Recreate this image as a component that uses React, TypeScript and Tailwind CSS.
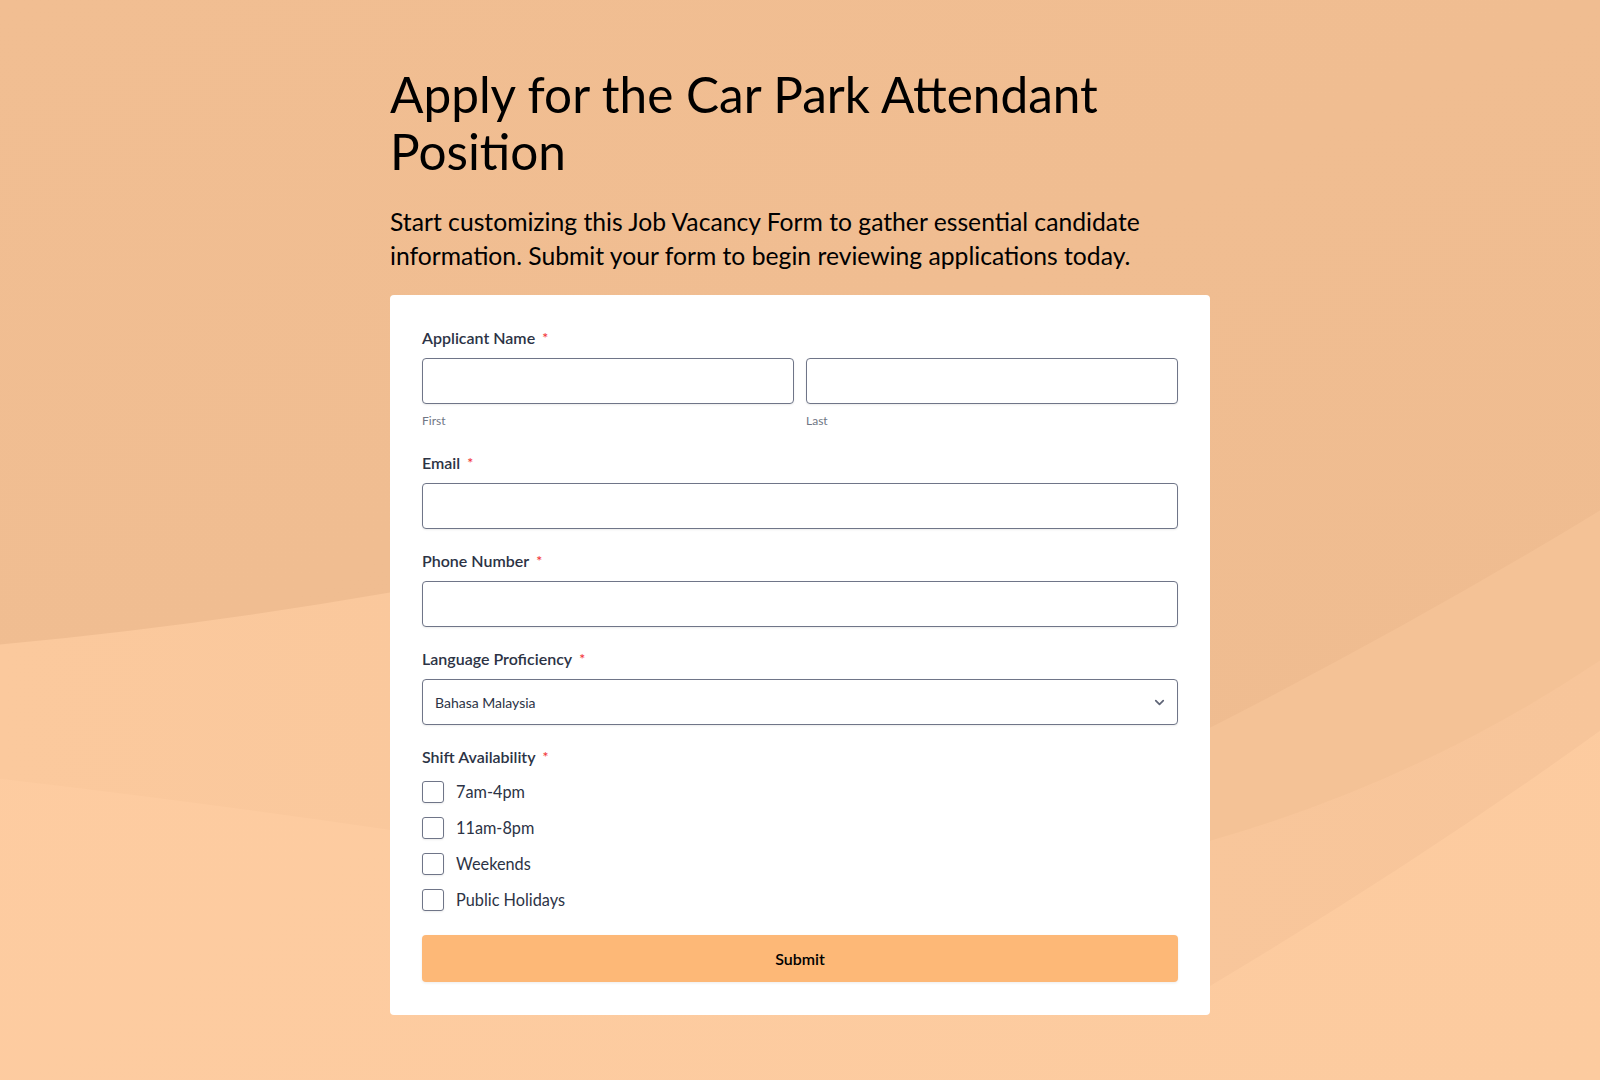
import { ChevronDown } from "lucide-react";

const font = { fontFamily: "Lato, 'Open Sans', sans-serif" };

function Label({ text }: { text: string }) {
  return (
    <div className="flex items-center text-[16px] font-semibold leading-5 text-[#2c3345]">
      {text}
      <span className="ml-[7px] text-[14px] leading-none text-[#f23a3c]">*</span>
    </div>
  );
}

const inputCls =
  "h-[46px] w-full rounded-[4px] border border-[#6f7588] bg-white shadow-[0_1px_2px_rgba(0,0,0,0.08)] outline-none";

const shifts = ["7am-4pm", "11am-8pm", "Weekends", "Public Holidays"];

function Background() {
  return (
    <svg
      className="pointer-events-none absolute inset-0 h-full w-full"
      viewBox="0 0 1600 1080"
      preserveAspectRatio="none"
    >
      <defs>
        <linearGradient id="light" x1="0" y1="0" x2="1" y2="1">
          <stop offset="0" stopColor="#fecca1" />
          <stop offset="1" stopColor="#fccb9f" />
        </linearGradient>
        <linearGradient id="mid" x1="0" y1="0" x2="1" y2="0">
          <stop offset="0" stopColor="#fbc99d" />
          <stop offset="1" stopColor="#f7c59a" />
        </linearGradient>
        <linearGradient id="dark" x1="0" y1="0" x2="1" y2="1">
          <stop offset="0" stopColor="#f1be92" />
          <stop offset="1" stopColor="#efbc90" />
        </linearGradient>
      </defs>
      <rect width="1600" height="1080" fill="url(#light)" />
      <path d="M0,778 Q700,860 1210,985 Q1420,860 1600,730 V0 H0 Z" fill="url(#mid)" />
      <path d="M1210,840 Q1420,780 1600,660 V0 H1210 Z" fill="#f4c296" />
      <path d="M0,644 Q200,625 390,592 L1210,727 Q1420,620 1600,510 V0 H0 Z" fill="url(#dark)" />
    </svg>
  );
}

export default function App() {
  return (
    <div className="relative min-h-screen overflow-hidden bg-[#fccb9f]" style={font}>
      <Background />
      <div className="relative mx-auto w-[820px] pt-[66px] pb-[66px]">
        <h1 className="text-[49.5px] font-normal leading-[57px] text-black">
          Apply for the Car Park Attendant Position
        </h1>
        <p className="mt-[25px] text-[24.7px] leading-[34px] text-black">
          Start customizing this Job Vacancy Form to gather essential candidate
          information. Submit your form to begin reviewing applications today.
        </p>

        <form className="mt-[22px] rounded-[4px] bg-white px-8 pt-[33px] pb-[33px]">
          <Label text="Applicant Name" />
          <div className="mt-[10px] grid grid-cols-2 gap-3">
            <div>
              <input className={inputCls} />
              <div className="mt-[9px] text-[12px] leading-4 text-[#6f7684]">First</div>
            </div>
            <div>
              <input className={inputCls} />
              <div className="mt-[9px] text-[12px] leading-4 text-[#6f7684]">Last</div>
            </div>
          </div>

          <div className="mt-[24px]">
            <Label text="Email" />
            <input className={`${inputCls} mt-[10px]`} />
          </div>

          <div className="mt-[22px]">
            <Label text="Phone Number" />
            <input className={`${inputCls} mt-[10px]`} />
          </div>

          <div className="mt-[22px]">
            <Label text="Language Proficiency" />
            <div className={`${inputCls} mt-[10px] flex items-center justify-between pl-3 pr-[10px]`}>
              <span className="text-[14px] text-[#2c3345]">Bahasa Malaysia</span>
              <ChevronDown size={15} strokeWidth={2.75} className="text-[#5f6577]" />
            </div>
          </div>

          <div className="mt-[22px]">
            <Label text="Shift Availability" />
            <div className="mt-[14px] flex flex-col gap-[14px]">
              {shifts.map((s) => (
                <label key={s} className="flex items-center gap-3">
                  <span className="h-[22px] w-[22px] rounded-[3px] border border-[#6f7588] bg-white shadow-[0_1px_2px_rgba(0,0,0,0.08)]" />
                  <span className="text-[16.3px] leading-[22px] text-[#2c3345]">{s}</span>
                </label>
              ))}
            </div>
          </div>

          <button
            type="button"
            className="mt-[24px] flex h-[47px] w-full items-center justify-center rounded-[4px] bg-[#fdb877] text-[16px] font-semibold text-black shadow-[0_1px_3px_rgba(0,0,0,0.08)]"
          >
            Submit
          </button>
        </form>
      </div>
    </div>
  );
}
